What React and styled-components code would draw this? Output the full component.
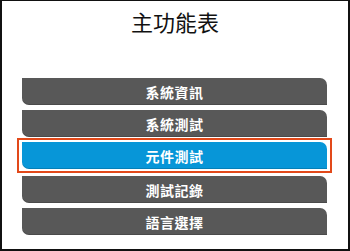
import { styled, createGlobalStyle } from "styled-components";

const GlobalStyle = createGlobalStyle`
  html, body {
    margin: 0;
    padding: 0;
    background: #ffffff;
  }
`;

const items = [
  { label: "系統資訊" },
  { label: "系統測試" },
  { label: "元件測試", active: true },
  { label: "測試記錄" },
  { label: "語言選擇" },
];

const App = () => {
  return (
    <>
      <GlobalStyle />
      <Frame>
        <Title>主功能表</Title>
        <Menu>
          {items.map((item) =>
            item.active ? (
              <Focus key={item.label}>
                <MenuButton $active>{item.label}</MenuButton>
              </Focus>
            ) : (
              <MenuButton key={item.label}>{item.label}</MenuButton>
            )
          )}
        </Menu>
      </Frame>
    </>
  );
};

const Frame = styled.div`
  box-sizing: border-box;
  width: 350px;
  height: 251px;
  border: 2px solid #111111;
  border-top-width: 1px;
  background: #ffffff;
  display: flex;
  flex-direction: column;
  font-family: "Liberation Serif", "Noto Sans CJK TC", serif;
`;

const Title = styled.h1`
  margin: 12px 0 0 0;
  font-size: 22px;
  line-height: 22px;
  font-weight: normal;
  color: #111111;
  text-align: center;
`;

const Menu = styled.div`
  display: flex;
  flex-direction: column;
  gap: 5px;
  padding: 43px 21px 0 20px;
`;

/* red selection frame round the current item */
const Focus = styled.div`
  border: 2px solid #e2491a;
  padding: 2px 3px;
  margin: -4px -5px -2px;
`;

const MenuButton = styled.div`
  height: 27px;
  display: flex;
  align-items: center;
  justify-content: center;
  border-radius: 0 7px 0 7px;
  background: ${(p) => (p.$active ? "#0796d8" : "#585858")};
  color: #ffffff;
  font-size: 14px;
  font-weight: bold;
  letter-spacing: 0.5px;
  box-shadow: inset 0 -1px 0 rgba(0, 0, 0, 0.15);
`;

export default App;
